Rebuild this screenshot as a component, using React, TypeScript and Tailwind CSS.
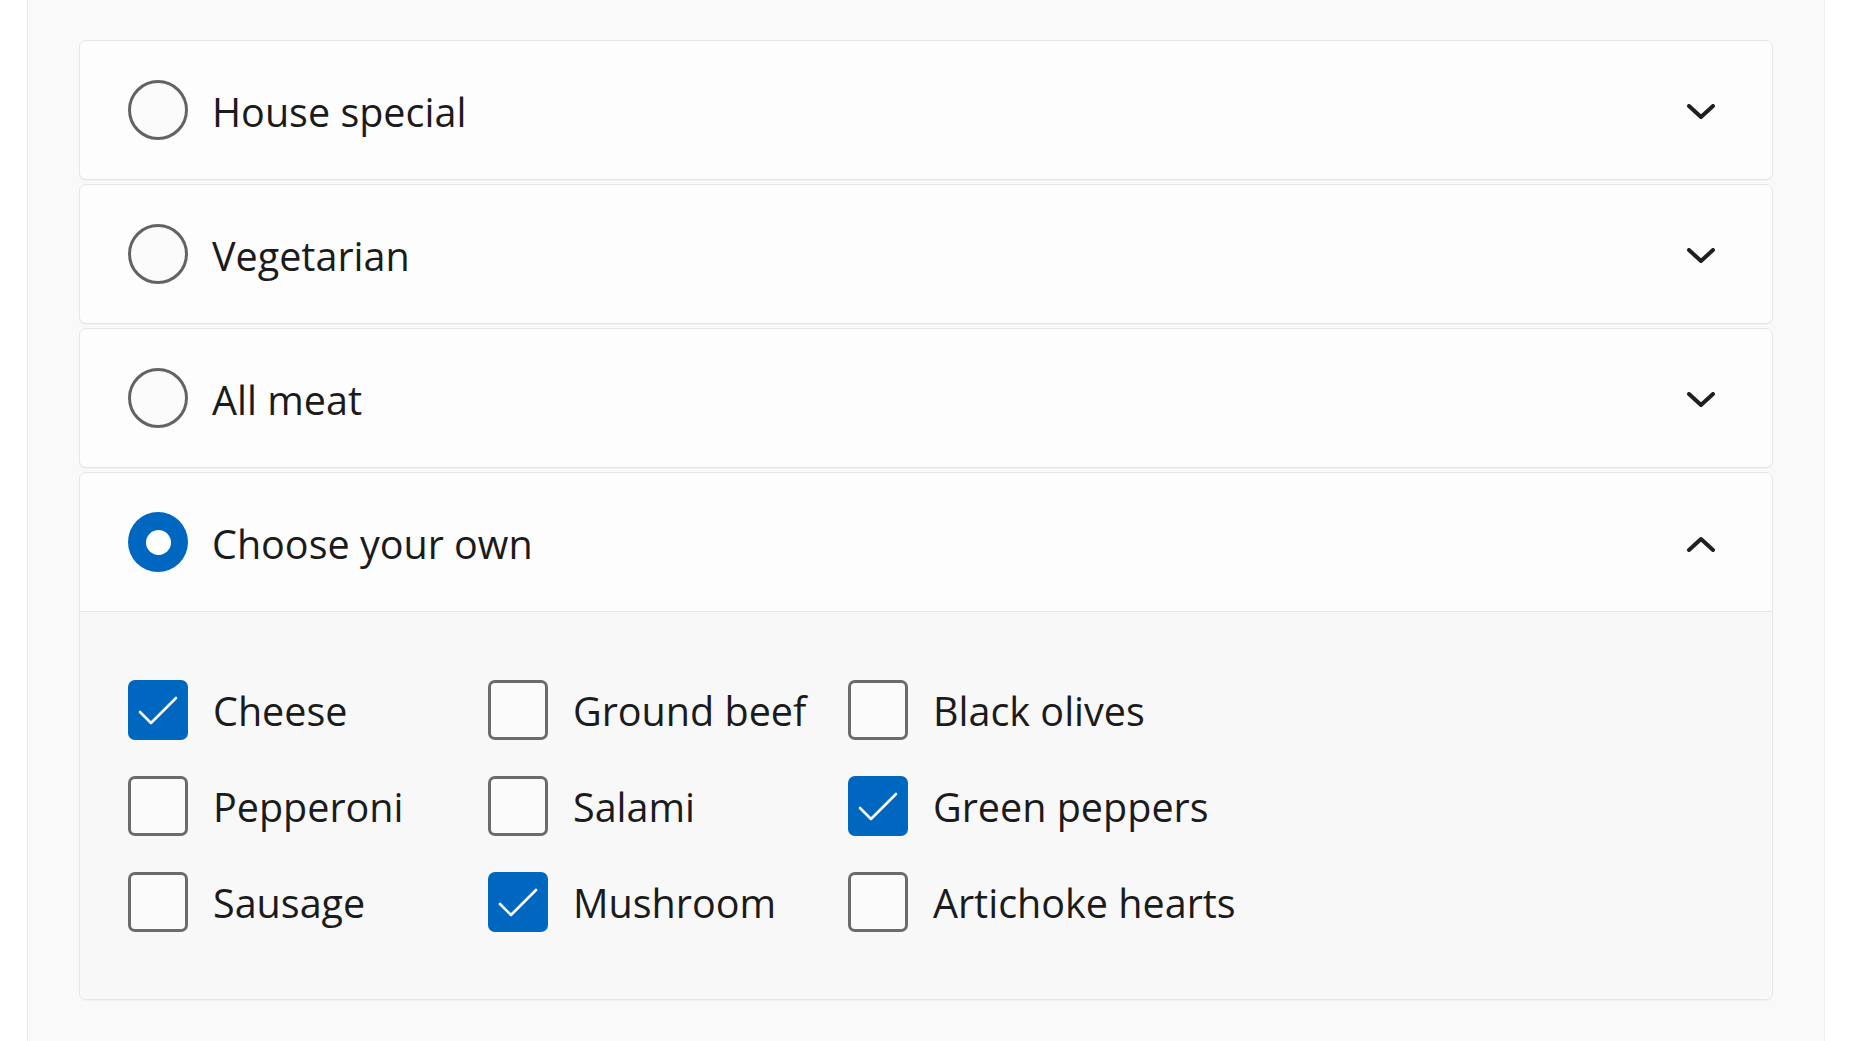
import { useState } from 'react'

const FONT = { fontFamily: '"Open Sans", "Noto Sans", Arial, sans-serif' }

const toppings = [
  'Cheese',
  'Ground beef',
  'Black olives',
  'Pepperoni',
  'Salami',
  'Green peppers',
  'Sausage',
  'Mushroom',
  'Artichoke hearts',
]

function Radio({ checked }: { checked: boolean }) {
  return checked ? (
    <span className="flex h-[60px] w-[60px] shrink-0 items-center justify-center rounded-full bg-[#0067c0]">
      <span className="h-[25px] w-[25px] rounded-full bg-white" />
    </span>
  ) : (
    <span className="h-[60px] w-[60px] shrink-0 rounded-full border-[3px] border-[#636363] bg-[#fbfbfb]" />
  )
}

function Checkbox({ checked }: { checked: boolean }) {
  if (!checked) {
    return <span className="h-[60px] w-[60px] shrink-0 rounded-[7px] border-[3px] border-[#6b6b6b] bg-[#fbfbfb]" />
  }
  return (
    <span className="flex h-[60px] w-[60px] shrink-0 items-center justify-center rounded-[7px] bg-[#0067c0]">
      <svg className="h-[60px] w-[60px]" viewBox="0 0 60 60" fill="none">
        <polyline points="12,32 23,43 48,18" stroke="white" strokeWidth="2.6" strokeLinecap="round" strokeLinejoin="round" />
      </svg>
    </span>
  )
}

function Chevron({ up }: { up?: boolean }) {
  return (
    <svg className="mt-[3px] h-[16px] w-[30px]" viewBox="0 0 30 16" fill="none">
      <polyline
        points={up ? '3,14 15,3 27,14' : '3,2 15,13 27,2'}
        stroke="#1f1f1f"
        strokeWidth="4"
        strokeLinecap="round"
        strokeLinejoin="round"
      />
    </svg>
  )
}

export default function App() {
  const [selected] = useState('Choose your own')
  const [checked] = useState<Record<string, boolean>>({
    Cheese: true,
    'Green peppers': true,
    Mushroom: true,
  })

  const options = ['House special', 'Vegetarian', 'All meat', 'Choose your own']

  return (
    <div className="min-h-screen bg-white pl-[27px] pr-[24px]" style={FONT}>
      <div className="flex min-h-[1041px] flex-col gap-[4px] border-x border-[#ececec] bg-[#f9f9f9] px-[51px] pt-[40px] text-[#1b1b1b]">
        {options.map((opt) => {
          const open = opt === selected
          return (
            <div key={opt} className="overflow-hidden rounded-[7px] border border-[#e6e6e6] bg-[#fdfdfd] shadow-[0_1px_1px_rgba(0,0,0,0.03)]">
              <div className="flex h-[138px] items-center pl-[48px] pr-[56px]">
                <Radio checked={open} />
                <span className="ml-[24px] flex-1 whitespace-nowrap pt-[5px] text-[39.5px] leading-none">{opt}</span>
                <Chevron up={open} />
              </div>
              {open && (
                <div className="grid grid-cols-[360px_360px_360px] gap-y-[36px] border-t border-[#e6e6e6] bg-[#f8f8f8] pb-[67px] pl-[48px] pt-[68px]">
                  {toppings.map((t) => (
                    <label key={t} className="flex items-center gap-[25px]">
                      <Checkbox checked={!!checked[t]} />
                      <span className="whitespace-nowrap pt-[4px] text-[39.5px] leading-none">{t}</span>
                    </label>
                  ))}
                </div>
              )}
            </div>
          )
        })}
      </div>
    </div>
  )
}
